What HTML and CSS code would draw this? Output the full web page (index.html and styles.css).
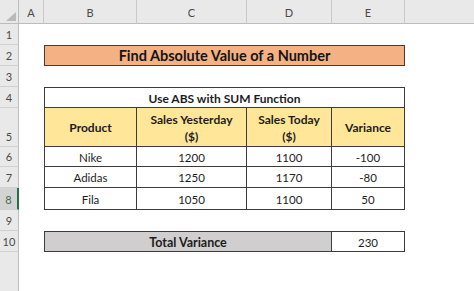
FILE: index.html
```html
<!DOCTYPE html>
<html>
<head>
<meta charset="utf-8">
<link rel="stylesheet" href="styles.css">
</head>
<body>
<div class="sheet">
  <div class="ch corner"><svg class="tri" width="10" height="9" viewBox="0 0 10 9"><polygon points="10,0 10,9 0,9" fill="#b9b9b9"/></svg></div>
  <div class="ch">A</div>
  <div class="ch">B</div>
  <div class="ch">C</div>
  <div class="ch">D</div>
  <div class="ch">E</div>
  <div class="ch last"></div>

  <div class="rh">1</div><div class="blank span6"></div>

  <div class="rh">2</div><div class="blank"></div>
  <div class="title span4">Find Absolute Value of a Number</div>
  <div class="blank"></div>

  <div class="rh">3</div><div class="blank span6"></div>

  <div class="rh">4</div><div class="blank"></div>
  <div class="cell sub first top span4">Use ABS with SUM Function</div>
  <div class="blank"></div>

  <div class="rh">5</div><div class="blank"></div>
  <div class="cell head first">Product</div>
  <div class="cell head">Sales Yesterday<br>($)</div>
  <div class="cell head">Sales Today<br>($)</div>
  <div class="cell head">Variance</div>
  <div class="blank"></div>

  <div class="rh">6</div><div class="blank"></div>
  <div class="cell first">Nike</div>
  <div class="cell">1200</div>
  <div class="cell">1100</div>
  <div class="cell">-100</div>
  <div class="blank"></div>

  <div class="rh">7</div><div class="blank"></div>
  <div class="cell first">Adidas</div>
  <div class="cell">1250</div>
  <div class="cell">1170</div>
  <div class="cell">-80</div>
  <div class="blank"></div>

  <div class="rh sel">8</div><div class="blank"></div>
  <div class="cell first">Fila</div>
  <div class="cell">1050</div>
  <div class="cell">1100</div>
  <div class="cell">50</div>
  <div class="blank"></div>

  <div class="rh">9</div><div class="blank span6"></div>

  <div class="rh">10</div><div class="blank"></div>
  <div class="cell total first top span3">Total Variance</div>
  <div class="cell top">230</div>
  <div class="blank"></div>

  <div class="rh rest"></div><div class="blank span6"></div>
</div>
</body>
</html>
```

FILE: styles.css
```css
html, body {
  margin: 0;
  padding: 0;
  background: #ffffff;
}

.sheet {
  display: grid;
  grid-template-columns: 19px 25px 93px 110px 85px 73px 1fr;
  grid-template-rows: 24px 21px 21px 21px 21px 39px 20px 21px 22px 21px 21px 1fr;
  width: 474px;
  height: 291px;
  font-family: Lato, "Open Sans", sans-serif;
  color: #1c1c1c;
  overflow: hidden;
}

.ch {
  background: #e9e9e9;
  border-right: 1px solid #c9c9c9;
  border-bottom: 1px solid #bdbdbd;
  display: flex;
  align-items: center;
  justify-content: center;
  font-size: 11px;
  color: #4a4a4a;
  padding-top: 2px;
  box-sizing: border-box;
}

.ch.last {
  border-right: none;
}

.corner {
  position: relative;
  border-right-color: #bdbdbd;
}

.tri {
  position: absolute;
  right: 2px;
  bottom: 2px;
}

.rh {
  background: #e9e9e9;
  border-right: 1px solid #bdbdbd;
  border-bottom: 1px solid #d0d0d0;
  display: flex;
  align-items: flex-end;
  justify-content: center;
  padding-bottom: 3px;
  box-sizing: border-box;
  font-size: 11px;
  color: #4a4a4a;
}

.rh.sel {
  background: #d3d3d3;
  border-right: 2px solid #217346;
  color: #3f6b50;
}

.rh.rest {
  border-bottom: none;
}

.blank {
  background: #ffffff;
}

.span6 { grid-column: span 6; }
.span4 { grid-column: span 4; }
.span3 { grid-column: span 3; }

.title {
  background: #f4b183;
  border: 1px solid #4a3a30;
  box-sizing: border-box;
  display: flex;
  align-items: center;
  justify-content: center;
  font-weight: 700;
  font-size: 14.5px;
  color: #151515;
}

.cell {
  border-right: 1px solid #3c3c3c;
  border-bottom: 1px solid #3c3c3c;
  box-sizing: border-box;
  display: flex;
  align-items: center;
  justify-content: center;
  text-align: center;
  font-size: 11.5px;
  line-height: 15px;
  padding-top: 1px;
}

.cell.first {
  border-left: 1px solid #3c3c3c;
}

.cell.top {
  border-top: 1px solid #3c3c3c;
}

.sub {
  font-weight: 700;
  font-size: 12px;
}

.head {
  background: #ffe699;
  font-weight: 700;
  font-size: 12px;
  line-height: 17px;
}

.total {
  background: #d0cece;
  font-weight: 700;
  font-size: 12.5px;
}
```
